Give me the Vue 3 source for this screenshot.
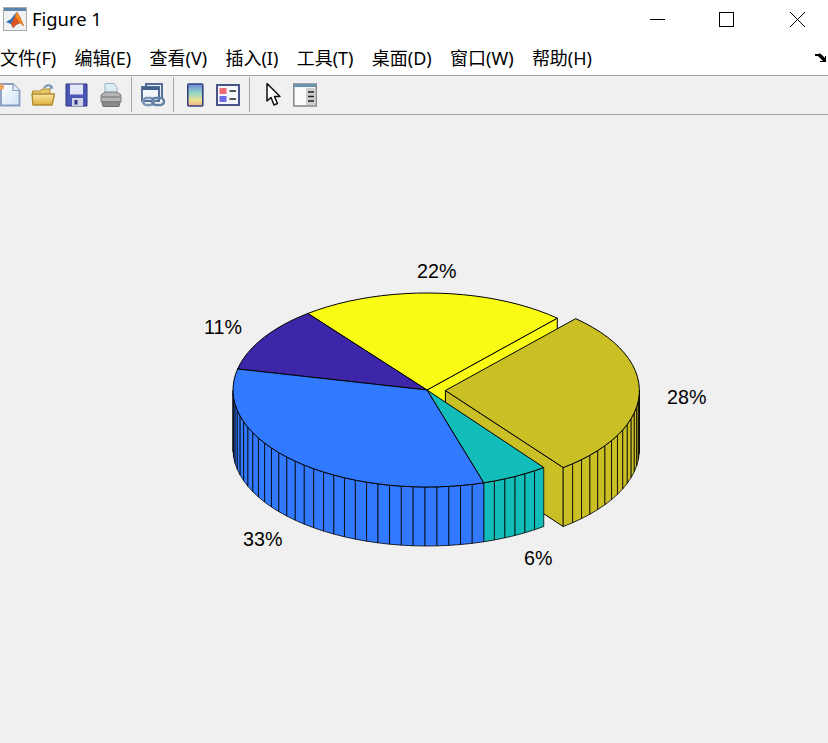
<script setup>
const menus = ['文件(F)', '编辑(E)', '查看(V)', '插入(I)', '工具(T)', '桌面(D)', '窗口(W)', '帮助(H)']

const RX = 194
const RY = 97
const DEPTH = 59
const rad = (a) => (a * Math.PI) / 180
const pt = (c, a, dy = 0) => [
  +(c[0] + RX * Math.cos(rad(a))).toFixed(2),
  +(c[1] - RY * Math.sin(rad(a)) + dy).toFixed(2)
]
const poly = (pts) => pts.map((p) => p.join(',')).join(' ')

function sliceShapes(c, from, to, n, color) {
  const step = (to - from) / n
  const rim = []
  for (let i = 0; i <= n; i++) rim.push(pt(c, from + step * i))
  const facets = []
  for (let i = 0; i < n; i++) {
    let a = from + step * i
    let b = a + step
    const lo = Math.max(a, 180)
    const hi = Math.min(b, 360)
    if (hi <= lo) continue
    facets.push(poly([pt(c, lo), pt(c, hi), pt(c, hi, DEPTH), pt(c, lo, DEPTH)]))
  }
  return { color, top: poly([c, ...rim]), facets }
}
const wall = (c, a) => poly([c, pt(c, a), pt(c, a, DEPTH), [c[0], c[1] + DEPTH]])

const C = [427, 390]
const G = [445.4, 390.5]
const YELLOW = '#f9fb15'
const GOLD = '#cbbf26'

const yellowWall = wall(C, 47.8)
const goldWall = wall(G, 307.4)
const slices = [
  sliceShapes(C, 47.8, 127.9, 23, YELLOW),
  sliceShapes(C, 127.9, 167.5, 12, '#3e26a8'),
  sliceShapes(G, 307.4, 407.8, 28, GOLD),
  sliceShapes(C, 287, 307, 6, '#12bdb9'),
  sliceShapes(C, 167.5, 287, 34, '#317aff')
]
const labels = [
  { t: '22%', x: 417, y: 278 },
  { t: '11%', x: 204, y: 334 },
  { t: '28%', x: 667, y: 404 },
  { t: '33%', x: 243, y: 546 },
  { t: '6%', x: 524, y: 565 }
]
</script>

<template>
  <div class="window">
    <header class="titlebar">
      <svg class="appicon" viewBox="0 0 24 24">
        <rect x="0.5" y="0.5" width="23" height="23" fill="#f1f1f1" stroke="#a9a9a9" />
        <rect x="1" y="1" width="22" height="3" fill="#5d86ad" />
        <path d="M3 15 L8 12 L11 8 L14 5 L17 10 L21 19 L17 16 L13 18 L10 21 L8 17 Z" fill="#2f6fb5" />
        <path d="M8 17 L11 11 L14 5 L17 10 L21 19 L17 16 L13 18 L10 21 Z" fill="#d9541e" />
        <path d="M12 9 L14 5 L17 10 L21 19 L17 16 Z" fill="#f08a24" />
      </svg>
      <span class="title">Figure 1</span>
      <div class="controls">
        <svg viewBox="0 0 15 15"><path d="M0 7.5H15" stroke="#000" fill="none" /></svg>
        <svg class="max" viewBox="0 0 15 15"><rect x="0.5" y="0.5" width="14" height="14" stroke="#000" fill="none" /></svg>
        <svg viewBox="0 0 15 15"><path d="M0 0L15 15M15 0L0 15" stroke="#000" fill="none" /></svg>
      </div>
    </header>

    <nav class="menubar">
      <span v-for="m in menus" :key="m" class="menu">{{ m }}</span>
      <svg class="grip" viewBox="0 0 11 9">
        <path d="M0 1H4V0L7 2L10 5V3L11 3V9H5L5 8H8L5 5L3 3H0Z" fill="#000" />
      </svg>
    </nav>

    <div class="toolbar">
      <div class="group first">
        <svg class="tool" viewBox="0 0 24 24">
          <defs>
            <linearGradient id="paper" x1="0" y1="0" x2="1" y2="1">
              <stop offset="0" stop-color="#ffffff" />
              <stop offset="1" stop-color="#cfe2f5" />
            </linearGradient>
            <linearGradient id="folder" x1="0" y1="0" x2="0" y2="1">
              <stop offset="0" stop-color="#fbe8a0" />
              <stop offset="1" stop-color="#e0b040" />
            </linearGradient>
            <linearGradient id="spectrum" x1="0" y1="0" x2="0" y2="1">
              <stop offset="0" stop-color="#6f86d8" />
              <stop offset="0.4" stop-color="#8fd6c8" />
              <stop offset="0.75" stop-color="#f0e08e" />
              <stop offset="1" stop-color="#f0a888" />
            </linearGradient>
          </defs>
          <path d="M4 1H16L22.5 7.5V22.5H4Z" fill="url(#paper)" stroke="#8a9cc0" stroke-width="1.8" />
          <path d="M16 1V7.5H22.5" fill="#e4eefa" stroke="#8a9cc0" stroke-width="1.2" />
          <circle cx="4" cy="4" r="3" fill="#f0a060" />
        </svg>
        <svg class="tool" viewBox="0 0 24 24">
          <path d="M13 5C15 1.5 19 1.5 21 4" fill="none" stroke="#6f92b5" stroke-width="1.8" />
          <path d="M20 2L22.5 5.5L18.5 6Z" fill="#6f92b5" />
          <path d="M1.5 8H9L11 6H19V13H1.5Z" fill="#e8c869" stroke="#b08c30" />
          <path d="M2 22L1 11H23.5L21 22Z" fill="url(#folder)" stroke="#b08c30" stroke-width="1.4" stroke-linejoin="round" />
        </svg>
        <svg class="tool" viewBox="0 0 24 24">
          <path d="M1 1H22V23H1Z" fill="#4c56b4" stroke="#2d3580" />
          <rect x="5" y="1.5" width="13" height="10" fill="#e2e6f6" />
          <rect x="7" y="15" width="11" height="8" fill="#cfd3e4" />
          <rect x="9.5" y="17" width="3" height="4.5" fill="#2d3580" />
        </svg>
        <svg class="tool" viewBox="0 0 24 24">
          <path d="M6 0.5H15L18 4.5V11H6Z" fill="#dcecf7" stroke="#9ab0c2" />
          <path d="M2 12L6 9H18L22 12V19H2Z" fill="#b4b4b4" stroke="#7a7a7a" />
          <path d="M3 19H21L20 23.5H4Z" fill="#8a8a8a" stroke="#6e6e6e" />
          <path d="M3 14H21" stroke="#6e6e6e" />
        </svg>
      </div>
      <i class="sep"></i>
      <div class="group">
        <svg class="tool" viewBox="0 0 24 24">
          <rect x="5" y="1" width="16" height="14" fill="#e8edf4" stroke="#43618f" stroke-width="1.8" />
          <rect x="1" y="4" width="17" height="14" fill="#f2f5f9" stroke="#43618f" stroke-width="1.8" />
          <rect x="1" y="4" width="17" height="3" fill="#43618f" />
          <rect x="2" y="15" width="11" height="7" rx="3.5" fill="none" stroke="#7b95b5" stroke-width="2.4" />
          <rect x="11" y="15" width="12" height="7" rx="3.5" fill="none" stroke="#5f7fa5" stroke-width="2.4" />
        </svg>
      </div>
      <i class="sep"></i>
      <div class="group mid">
        <svg class="tool" viewBox="0 0 24 24">
          <rect x="4.8" y="1" width="15" height="22" rx="1" fill="url(#spectrum)" stroke="#34437c" stroke-width="1.6" />
        </svg>
        <svg class="tool" viewBox="0 0 24 24">
          <rect x="1" y="2" width="22" height="20" fill="#f4f6fa" stroke="#34437c" stroke-width="1.8" />
          <rect x="3.5" y="5" width="7" height="6" fill="#ec6c72" />
          <rect x="3.5" y="13" width="7" height="6" fill="#6a6ce6" />
          <path d="M13.5 8H20M13.5 16H20" stroke="#222" stroke-width="1.6" />
        </svg>
      </div>
      <i class="sep"></i>
      <div class="group last">
        <svg class="tool" viewBox="0 0 24 24">
          <path d="M6 0.5V18L10 14.5L13 22L16.5 20.5L13.5 13.5H19Z" fill="#fff" stroke="#111" stroke-width="1.5" stroke-linejoin="round" />
        </svg>
        <svg class="tool" viewBox="0 0 24 24">
          <rect x="0.8" y="1" width="22.4" height="22" fill="#f4f4f4" stroke="#868c92" stroke-width="1.6" />
          <rect x="0.8" y="1" width="22.4" height="3" fill="#6c93ad" />
          <rect x="2" y="5" width="11" height="17" fill="#fbfbfb" />
          <rect x="13" y="5" width="9.4" height="17" fill="#cfcfcf" />
          <path d="M15 9H21M15 13.5H21M15 18H21" stroke="#222" stroke-width="1.6" />
        </svg>
      </div>
    </div>

    <main class="figure">
      <svg class="plot" viewBox="0 115 828 628">
        <polygon :points="yellowWall" :fill="YELLOW" class="edge" />
        <template v-for="(s, i) in slices" :key="i">
          <polygon v-if="i === 2" :points="goldWall" :fill="GOLD" class="edge" />
          <polygon v-for="(f, j) in s.facets" :key="j" :points="f" :fill="s.color" class="edge facet" />
          <polygon :points="s.top" :fill="s.color" class="edge" />
        </template>
        <text v-for="l in labels" :key="l.t" :x="l.x" :y="l.y" class="label">{{ l.t }}</text>
      </svg>
    </main>
  </div>
</template>

<style scoped>
.window {
  width: 828px;
  height: 743px;
  display: flex;
  flex-direction: column;
  overflow: hidden;
  background: #fff;
  font-family: "Noto Sans", "Noto Sans CJK SC", sans-serif;
  color: #000;
}
.titlebar {
  height: 40px;
  flex: none;
  display: flex;
  align-items: center;
  padding-left: 3px;
  box-sizing: border-box;
}
.appicon {
  width: 24px;
  height: 24px;
  margin-top: -2px;
  filter: blur(0.3px);
}
.title {
  margin-left: 5px;
  font-size: 18.4px;
  line-height: 38px;
  margin-top: -2px;
}
.controls {
  margin-left: auto;
  display: flex;
  align-items: center;
  gap: 54px;
  padding-right: 23px;
  margin-top: -1px;
}
.controls svg {
  width: 15px;
  height: 15px;
}
.controls .max {
  margin-right: 2px;
}
.menubar {
  height: 36px;
  flex: none;
  display: flex;
  align-items: center;
  gap: 18.3px;
  font-size: 18px;
  box-sizing: border-box;
  border-bottom: 1px solid #a0a0a0;
  padding-bottom: 2px;
}
.grip {
  width: 11px;
  height: 9px;
  margin-left: auto;
  margin-right: 2px;
  margin-top: 2px;
}
.toolbar {
  height: 39px;
  flex: none;
  display: flex;
  align-items: center;
  background: #f0f0f0;
  border-bottom: 1px solid #a0a0a0;
  box-sizing: border-box;
  padding-bottom: 1px;
}
.group {
  display: flex;
  align-items: center;
  gap: 9px;
}
.group.first {
  margin-left: -3px;
  gap: 10px;
}
.group.mid {
  margin-right: 1px;
}
.group.last {
  gap: 8px;
  margin-left: 2px;
}
.tool {
  width: 24px;
  height: 24px;
  flex: none;
  filter: blur(0.35px);
}
.sep {
  width: 1px;
  height: 35px;
  background: #a8a8a8;
  margin: 0 9px 0 8px;
  flex: none;
}
.figure {
  flex: 1;
  min-height: 0;
  background: #f0f0f0;
}
.plot {
  display: block;
  width: 828px;
  height: 628px;
}
.edge {
  stroke: #000;
  stroke-width: 1;
  stroke-linejoin: round;
}
.edge.facet {
  stroke-width: 0.8;
}
.label {
  font-family: "Liberation Sans", Arial, sans-serif;
  font-size: 19.7px;
  fill: #000;
}
</style>
